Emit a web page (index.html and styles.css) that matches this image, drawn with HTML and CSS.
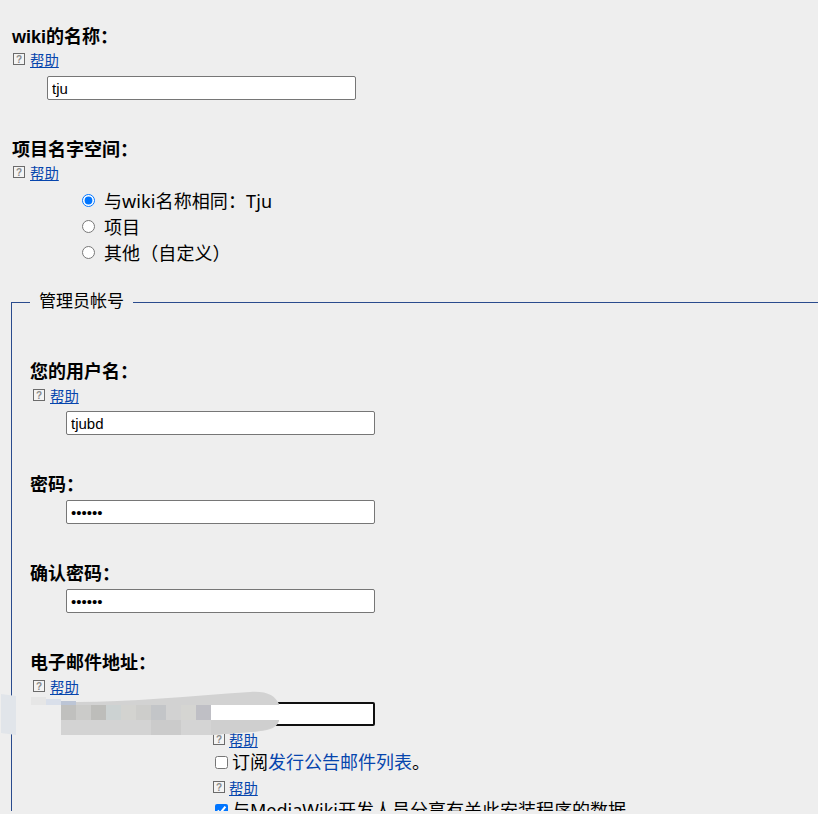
FILE: index.html
```html
<!DOCTYPE html>
<html lang="zh">
<head>
<meta charset="utf-8">
<title>MediaWiki 安装</title>
<link rel="stylesheet" href="styles.css">
</head>
<body>
<div class="page">
	<div class="field">
		<div class="label">wiki的名称：</div>
		<div class="help"><svg class="help_icon" width="13" height="13" viewBox="0 0 13 13"><rect x="0.5" y="0.5" width="11" height="11" fill="#f4f4f4" stroke="#6b6b6b"/><text x="6" y="9.5" class="help_q">?</text></svg><a href="#">帮助</a></div>
		<div class="control"><input type="text" class="textinput" value="tju"></div>
	</div>

	<div class="field ns">
		<div class="label">项目名字空间：</div>
		<div class="help"><svg class="help_icon" width="13" height="13" viewBox="0 0 13 13"><rect x="0.5" y="0.5" width="11" height="11" fill="#f4f4f4" stroke="#6b6b6b"/><text x="6" y="9.5" class="help_q">?</text></svg><a href="#">帮助</a></div>
		<ul class="radios">
			<li><input type="radio" name="ns" checked><label>与wiki名称相同：Tju</label></li>
			<li><input type="radio" name="ns"><label>项目</label></li>
			<li><input type="radio" name="ns"><label>其他（自定义）</label></li>
		</ul>
	</div>

	<fieldset class="admin">
		<legend>管理员帐号</legend>

		<div class="field first">
			<div class="label">您的用户名：</div>
			<div class="help"><svg class="help_icon" width="13" height="13" viewBox="0 0 13 13"><rect x="0.5" y="0.5" width="11" height="11" fill="#f4f4f4" stroke="#6b6b6b"/><text x="6" y="9.5" class="help_q">?</text></svg><a href="#">帮助</a></div>
			<div class="control"><input type="text" class="textinput" value="tjubd"></div>
		</div>

		<div class="field next">
			<div class="label">密码：</div>
			<div class="control"><input type="password" class="textinput" value="123456"></div>
		</div>

		<div class="field next">
			<div class="label">确认密码：</div>
			<div class="control"><input type="password" class="textinput" value="123456"></div>
		</div>

		<div class="field next">
			<div class="label">电子邮件地址：</div>
			<div class="help"><svg class="help_icon" width="13" height="13" viewBox="0 0 13 13"><rect x="0.5" y="0.5" width="11" height="11" fill="#f4f4f4" stroke="#6b6b6b"/><text x="6" y="9.5" class="help_q">?</text></svg><a href="#">帮助</a></div>
			<div class="control"><input type="text" class="textinput focused"></div>
		</div>

		<div class="options">
			<div class="help"><svg class="help_icon" width="13" height="13" viewBox="0 0 13 13"><rect x="0.5" y="0.5" width="11" height="11" fill="#f4f4f4" stroke="#6b6b6b"/><text x="6" y="9.5" class="help_q">?</text></svg><a href="#">帮助</a></div>
			<div class="check"><input type="checkbox"><label>订阅<a href="#">发行公告邮件列表</a>。</label></div>
			<div class="help"><svg class="help_icon" width="13" height="13" viewBox="0 0 13 13"><rect x="0.5" y="0.5" width="11" height="11" fill="#f4f4f4" stroke="#6b6b6b"/><text x="6" y="9.5" class="help_q">?</text></svg><a href="#">帮助</a></div>
			<div class="check"><input type="checkbox" checked><label>与MediaWiki开发人员分享有关此安装程序的数据。</label></div>
		</div>
	</fieldset>
</div>

<!-- smudge over the e-mail address -->
<svg class="smudge" width="290" height="50" viewBox="0 0 290 50">
	<path d="M1 4 L16 6 L16 45 L1 43Z" fill="#e1e5ea"/>
	<path d="M76 12 C130 12 190 6 250 2 C268 1 275 6 279 14 L279 31 C276 40 265 41 250 42 L211 45 L76 45Z" fill="#d2d2d2"/>
	<rect x="31" y="7" width="15" height="8" fill="#e6e6e6"/>
	<rect x="46" y="9" width="15" height="6" fill="#d9dfea"/>
	<rect x="61" y="11" width="15" height="4" fill="#bcc5d6"/>
	<rect x="61" y="15" width="15" height="15" fill="#c0c0be"/>
	<rect x="76" y="15" width="15" height="15" fill="#cbcbc9"/>
	<rect x="91" y="15" width="15" height="15" fill="#bdbdba"/>
	<rect x="106" y="15" width="15" height="15" fill="#ccd2d2"/>
	<rect x="121" y="15" width="15" height="15" fill="#d3d3d0"/>
	<rect x="136" y="15" width="15" height="15" fill="#cdcdcb"/>
	<rect x="151" y="15" width="15" height="15" fill="#c3c5c8"/>
	<rect x="166" y="15" width="15" height="15" fill="#d2d2d2"/>
	<rect x="181" y="15" width="15" height="15" fill="#d5d5d2"/>
	<rect x="196" y="15" width="15" height="15" fill="#bfbfc5"/>
	<rect x="211" y="15" width="68" height="15" fill="#fff"/>
	<rect x="61" y="30" width="90" height="15" fill="#d3d3d3"/>
	<rect x="151" y="30" width="30" height="15" fill="#cbcbcb"/>
	<rect x="181" y="30" width="30" height="15" fill="#d4d4d4"/>
	<path d="M211 30 H279 C276 38 265 41 250 42 L211 45Z" fill="#cfcfcf"/>
</svg>
</body>
</html>
```

FILE: styles.css
```css
html,body{margin: 0;padding: 0;height: 100%;overflow: hidden;}
body{background: #eee;color: #000;font-family: "Liberation Sans","Noto Sans CJK SC",sans-serif;font-size: 18px;position: relative;}
a{color: #0645ad;}
.page{box-sizing: border-box;width: 818px;height: 811px;overflow: hidden;padding: 25px 0 0 12px;}
.field{margin: 0;}
.ns{margin-top: 38px;}
.label{font-size: 18px;font-weight: bold;line-height: 24px;height: 24px;}
.help{font-size: 14.4px;line-height: 20px;height: 20px;margin-top: 2px;display: flex;align-items: center;}
.help_icon{margin: -3px 4px 0 1px;flex: none;}
.help_q{font-family: "Liberation Sans",sans-serif;font-size: 10px;font-weight: bold;fill: #8a8a8a;text-anchor: middle;}
.control{padding: 5px 0 0 35px;}
.textinput{box-sizing: border-box;display: block;width: 309px;height: 24px;padding: 1px 4px;margin: 0;border: 1px solid #767676;border-radius: 2px;background: #fff;font-family: "Liberation Sans","Noto Sans CJK SC",sans-serif;font-size: 15px;color: #000;}
.focused{border: 2px solid #101010;}
.radios{list-style: none;margin: 4px 0 0 0;padding: 0 0 0 70px;font-family: "Noto Sans","Noto Sans CJK SC",sans-serif;letter-spacing: 0.1px;}
.radios li{height: 26px;line-height: 26px;display: flex;align-items: center;}
.radios input{margin: 0 9px 0 0;width: 13px;height: 13px;flex: none;position: relative;top: -1px;}
.admin{margin: 24px 0 0 -1px;padding: 0 0 0 18px;border: 0;border-top: 1px solid #2a4b8d;border-left: 1px solid #2a4b8d;min-width: 0;height: 600px;}
.admin legend{padding: 0 9px;font-size: 17px;line-height: 24px;}
.first{padding-top: 46px;}
.next{margin-top: 38px;}
.admin .help{margin: 3px 0 0 2px;}
.admin .control{padding: 4px 0 0 36px;}
.admin .label + .control{padding-top: 3px;}
.options{margin-left: 180px;}
.admin .options .help{margin-top: 5px;}
.options .help_icon{margin-right: 3px;}
.check{height: 24px;line-height: 24px;display: flex;align-items: center;margin-top: -1px;white-space: nowrap;font-family: "Noto Sans","Noto Sans CJK SC",sans-serif;}
.check input{margin: 0 4px 0 5px;width: 13px;height: 13px;flex: none;}
.check a{text-decoration: none;}
.smudge{position: absolute;left: 0;top: 690px;}
```
